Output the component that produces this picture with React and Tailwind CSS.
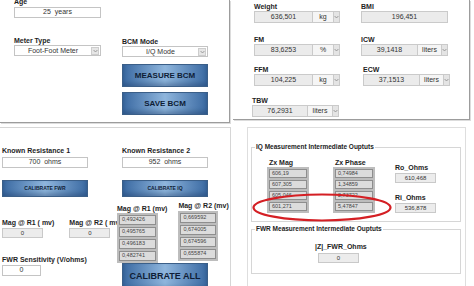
import React from "react";

const Label = ({ children, className = "" }) => (
  <div className={`text-[7px] font-bold leading-[8px] text-[#1e1e1e] whitespace-nowrap ${className}`}>
    {children}
  </div>
);

const Chevron = () => (
  <svg width="5" height="4" viewBox="0 0 5 4">
    <path d="M0.6 1 L2.5 3 L4.4 1" fill="none" stroke="#8a8a8a" strokeWidth="0.8" />
  </svg>
);

const Select = ({ children }) => (
  <div className="flex items-center h-[11px] border border-[#c4c4c4] bg-white">
    <div className="flex-1 text-center text-[7px] leading-[9px] text-[#333]">{children}</div>
    <div className="w-[8px] h-[8px] mr-[1px] flex items-center justify-center bg-[#e6e6e6] border border-[#cdcdcd]">
      <Chevron />
    </div>
  </div>
);

const Btn = ({ children, className = "" }) => (
  <div
    className={`flex items-center justify-center border border-[#3b5f88] bg-gradient-to-r from-[#3b6aa2] via-[#8fb6dd] to-[#3b6aa2] shadow-[inset_0_-3px_4px_rgba(20,50,90,0.35)] text-[#0f1d36] font-bold whitespace-nowrap ${className}`}
  >
    {children}
  </div>
);

const Combo = ({ value, unit, w = 59, u = 20 }) => (
  <div className="flex h-[12px]">
    <div
      className="flex items-center justify-center bg-[#ebebeb] border border-[#cacaca] text-[7px] text-[#333]"
      style={{ width: w }}
    >
      {value}
    </div>
    <div
      className="flex items-center justify-center bg-[#f5f5f5] border-y border-[#cacaca] text-[7px] text-[#333]"
      style={{ width: u }}
    >
      {unit}
    </div>
    <div className="w-[7px] flex items-center justify-center bg-[#e4e4e4] border border-[#cacaca]">
      <Chevron />
    </div>
  </div>
);

const Gray = ({ w = 87, children }) => (
  <div
    className="flex items-center justify-center h-[12px] bg-[#ebebeb] border border-[#cacaca] text-[7px] text-[#333]"
    style={{ width: w }}
  >
    {children}
  </div>
);

const WhiteBox = ({ w, h = 11, children }) => (
  <div
    className="flex items-center justify-center bg-white border border-[#c4c4c4] text-[7px] text-[#333]"
    style={{ width: w, height: h }}
  >
    {children}
  </div>
);

const SmallBox = ({ children }) => (
  <div className="flex items-center justify-center w-[41px] h-[10px] bg-[#ececec] border border-[#c9c9c9] text-[6px] text-[#333]">
    {children}
  </div>
);

const Stack = ({ items, w = 41, h = 10 }) => (
  <div className="flex flex-col gap-[2px] p-[2px] bg-[#bdbdbd]" style={{ width: w }}>
    {items.map((v) => (
      <div
        key={v}
        className="flex items-center pl-[2px] bg-[#dcdcdc] border border-[#8e8e8e] text-[5.5px] text-[#444] leading-none"
        style={{ height: h }}
      >
        {v}
      </div>
    ))}
  </div>
);

export default function App() {
  return (
    <div className="relative w-[474px] h-[286px] overflow-hidden bg-white font-['Liberation_Sans',Arial,sans-serif]">
      {/* top row */}
      <div className="flex items-start h-[127px]">
        <div className="w-[230px] h-[123px] border-r border-b border-[#9c9c9c] shadow-[1px_1px_0_#dcdcdc]">
          <div className="ml-[14px] -mt-[2px] w-[87px]">
            <Label>Age</Label>
            <div className="mt-[1px]">
              <WhiteBox w={87}>25&nbsp; years</WhiteBox>
            </div>
          </div>
          <div className="flex mt-[19px]">
            <div className="ml-[14px] w-[87px]">
              <Label>Meter Type</Label>
              <Select>Foot-Foot Meter</Select>
            </div>
            <div className="ml-[21px] w-[86px]">
              <Label className="mt-[1px]">BCM Mode</Label>
              <Select>I/Q Mode</Select>
              <Btn className="mt-[7px] h-[23px] text-[8px]">MEASURE BCM</Btn>
              <Btn className="mt-[5px] h-[23px] text-[8px]">SAVE BCM</Btn>
            </div>
          </div>
        </div>

        <div className="ml-[3px] w-[237px] h-[120px] border-r border-b border-[#9c9c9c] shadow-[1px_1px_0_#dcdcdc]">
          <div className="flex mt-[3px]">
            <div className="ml-[21px] w-[107px]">
              <Label>Weight</Label>
              <Combo value="636,501" unit="kg" />
            </div>
            <div>
              <Label>BMI</Label>
              <Gray w={87}>196,451</Gray>
            </div>
          </div>
          <div className="flex mt-[13px]">
            <div className="ml-[21px] w-[107px]">
              <Label>FM</Label>
              <Combo value="83,6253" unit="%" />
            </div>
            <div>
              <Label>ICW</Label>
              <Combo value="39,1418" unit="liters" w={57} u={23} />
            </div>
          </div>
          <div className="flex mt-[10px]">
            <div className="ml-[21px] w-[109px]">
              <Label>FFM</Label>
              <Combo value="104,225" unit="kg" />
            </div>
            <div>
              <Label>ECW</Label>
              <Combo value="37,1513" unit="liters" w={57} u={23} />
            </div>
          </div>
          <div className="ml-[19px] mt-[11px]">
            <Label>TBW</Label>
            <Combo value="76,2931" unit="liters" w={56} u={24} />
          </div>
        </div>
      </div>

      {/* bottom row */}
      <div className="flex items-start">
        <div className="w-[231px] h-[159px] border-t border-r border-[#d6d6d6]">
          <div className="flex mt-[19px]">
            <div className="ml-[2px] w-[115px]">
              <Label>Known Resistance 1</Label>
              <div className="mt-[2px]">
                <WhiteBox w={86}>700&nbsp; ohms</WhiteBox>
              </div>
              <Btn className="mt-[12px] w-[86px] h-[17px] text-[5px]">CALIBRATE FWR</Btn>
              <div className="flex gap-[15px] mt-[22px]">
                <div>
                  <Label className="text-[5.5px]">Mag @ R1 ( mv)</Label>
                  <div className="mt-[1px]">
                    <SmallBox>0</SmallBox>
                  </div>
                </div>
                <div>
                  <Label className="text-[5.5px]">Mag @ R2 ( mv)</Label>
                  <div className="mt-[1px]">
                    <SmallBox>0</SmallBox>
                  </div>
                </div>
              </div>
              <Label className="mt-[18px]">FWR Sensitivity (V/ohms)</Label>
              <div className="mt-[1px]">
                <WhiteBox w={39}>0</WhiteBox>
              </div>
            </div>
            <div className="w-[93px]">
              <Label className="ml-[5px]">Known Resistance 2</Label>
              <div className="mt-[2px] ml-[5px]">
                <WhiteBox w={86}>952&nbsp; ohms</WhiteBox>
              </div>
              <Btn className="mt-[12px] ml-[5px] w-[86px] h-[17px] text-[5px]">CALIBRATE IQ</Btn>
              <div className="flex items-start gap-[11px]">
                <div className="mt-[8px]">
                  <Label className="text-[5.5px]">Mag @ R1 (mv)</Label>
                  <Stack items={["0,492426", "0,495765", "0,496183", "0,482741"]} />
                </div>
                <div className="mt-[5px]">
                  <Label className="text-[5.5px]">Mag @ R2 (mv)</Label>
                  <div className="mt-[1px]">
                    <Stack items={["0,669592", "0,674005", "0,674596", "0,655874"]} w={40} />
                  </div>
                </div>
              </div>
              <Btn className="ml-[5px] w-[86px] h-[28px] text-[9px]">CALIBRATE ALL</Btn>
            </div>
          </div>
        </div>

        <div className="ml-[16px] w-[219px] h-[159px] border-t border-x border-[#dedede]">
          <fieldset className="ml-[3px] mt-[15px] w-[210px] border border-[#d6d6d6] pb-[8px]">
            <legend className="ml-[3px] px-[1px] text-[6.5px] font-bold leading-[8px] text-[#222]">
              IQ Measurement Intermediate Ouptuts
            </legend>
            <div className="flex items-start ml-[15px] mt-[8px]">
              <div>
                <Label className="text-[5.5px] pl-[2px]">Zx Mag</Label>
                <Stack items={["606,19", "607,305", "605,046", "601,271"]} w={42} h={9} />
              </div>
              <div className="ml-[24px]">
                <Label className="text-[5.5px] pl-[2px]">Zx Phase</Label>
                <Stack items={["0,74984", "1,34859", "2,73722", "5,47847"]} w={42} h={9} />
              </div>
              <div className="ml-[20px] mt-[5px]">
                <Label className="text-[5.5px]">Ro_Ohms</Label>
                <div className="mt-[1px]">
                  <SmallBox>610,468</SmallBox>
                </div>
                <Label className="text-[5.5px] mt-[11px]">Ri_Ohms</Label>
                <div className="mt-[1px]">
                  <SmallBox>536,878</SmallBox>
                </div>
              </div>
            </div>
          </fieldset>
          <fieldset className="ml-[3px] mt-[3px] w-[210px] h-[49px] border border-[#d6d6d6]">
            <legend className="ml-[3px] px-[1px] text-[6.5px] font-bold leading-[8px] text-[#222]">
              FWR Measurement Intermediate Ouptuts
            </legend>
            <div className="ml-[63px] mt-[10px]">
              <Label className="text-[5.5px]">|Z|_FWR_Ohms</Label>
              <div className="mt-[2px] ml-[3px]">
                <SmallBox>0</SmallBox>
              </div>
            </div>
          </fieldset>
        </div>
      </div>

      {/* red annotation ellipse */}
      <svg className="absolute left-[252px] top-[193px]" width="140" height="29" viewBox="0 0 140 29">
        <ellipse cx="70" cy="14.5" rx="68.5" ry="13" fill="none" stroke="#d41f24" strokeWidth="2.2" />
      </svg>
    </div>
  );
}
